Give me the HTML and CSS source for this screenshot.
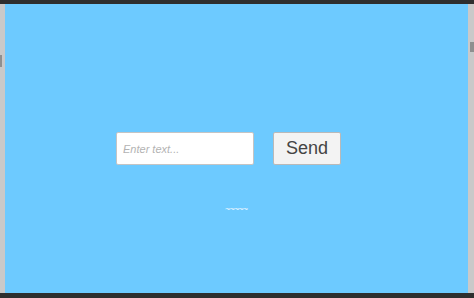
FILE: index.html
```html
<!DOCTYPE html>
<html>
<head>
<meta charset="utf-8">
<link rel="stylesheet" href="styles.css">
</head>
<body>
<div class="frame">
  <div class="topbar"></div>
  <div class="middle">
    <div class="side left"><div class="thumb"></div></div>
    <div class="main">
      <div class="row">
        <input class="field" type="text" placeholder="Enter text...">
        <button class="send">Send</button>
      </div>
      <div class="tiny">~~~~~</div>
    </div>
    <div class="side right"><div class="thumb"></div></div>
  </div>
  <div class="bottombar"></div>
</div>
</body>
</html>
```
FILE: styles.css
```css
html, body {
  margin: 0;
  padding: 0;
  width: 474px;
  height: 298px;
  overflow: hidden;
  font-family: "Liberation Sans", Arial, sans-serif;
}
.frame {
  display: flex;
  flex-direction: column;
  width: 474px;
  height: 298px;
}
.topbar {
  height: 4px;
  background: #2e2e2e;
}
.bottombar {
  height: 5px;
  background: #2e2e2e;
}
.middle {
  flex: 1;
  display: flex;
}
.side {
  background: #c9c9c9;
}
.side.left {
  width: 5px;
  padding-top: 51px;
  box-sizing: border-box;
}
.side.left .thumb {
  width: 2px;
  height: 12px;
  background: #8f8f8f;
}
.side.right {
  width: 6px;
  padding-top: 38px;
  box-sizing: border-box;
  display: flex;
  flex-direction: column;
  align-items: flex-end;
}
.side.right .thumb {
  width: 4px;
  height: 10px;
  background: #8f8f8f;
}
.main {
  flex: 1;
  background: #6dcaff;
  padding-top: 128px;
  padding-left: 111px;
  box-sizing: border-box;
}
.row {
  display: flex;
  gap: 19px;
}
.field {
  width: 138px;
  height: 33px;
  box-sizing: border-box;
  border: 1px solid #c4c4c4;
  border-radius: 2px;
  background: #ffffff;
  padding: 0 6px;
  font-family: "Liberation Sans", Arial, sans-serif;
  font-size: 11px;
  outline: none;
  margin: 0;
}
.field::placeholder {
  color: #b3b3b3;
  font-style: italic;
}
.send {
  width: 68px;
  height: 33px;
  box-sizing: border-box;
  border: 1px solid #b9b9b9;
  border-radius: 2px;
  background: #f3f3f3;
  color: #444444;
  font-family: "Liberation Sans", Arial, sans-serif;
  font-size: 18px;
  padding: 0;
  margin: 0;
}
.tiny {
  margin-top: 40px;
  margin-left: 109px;
  font-size: 9px;
  line-height: 9px;
  color: #eef8ff;
  letter-spacing: -0.8px;
}
```
